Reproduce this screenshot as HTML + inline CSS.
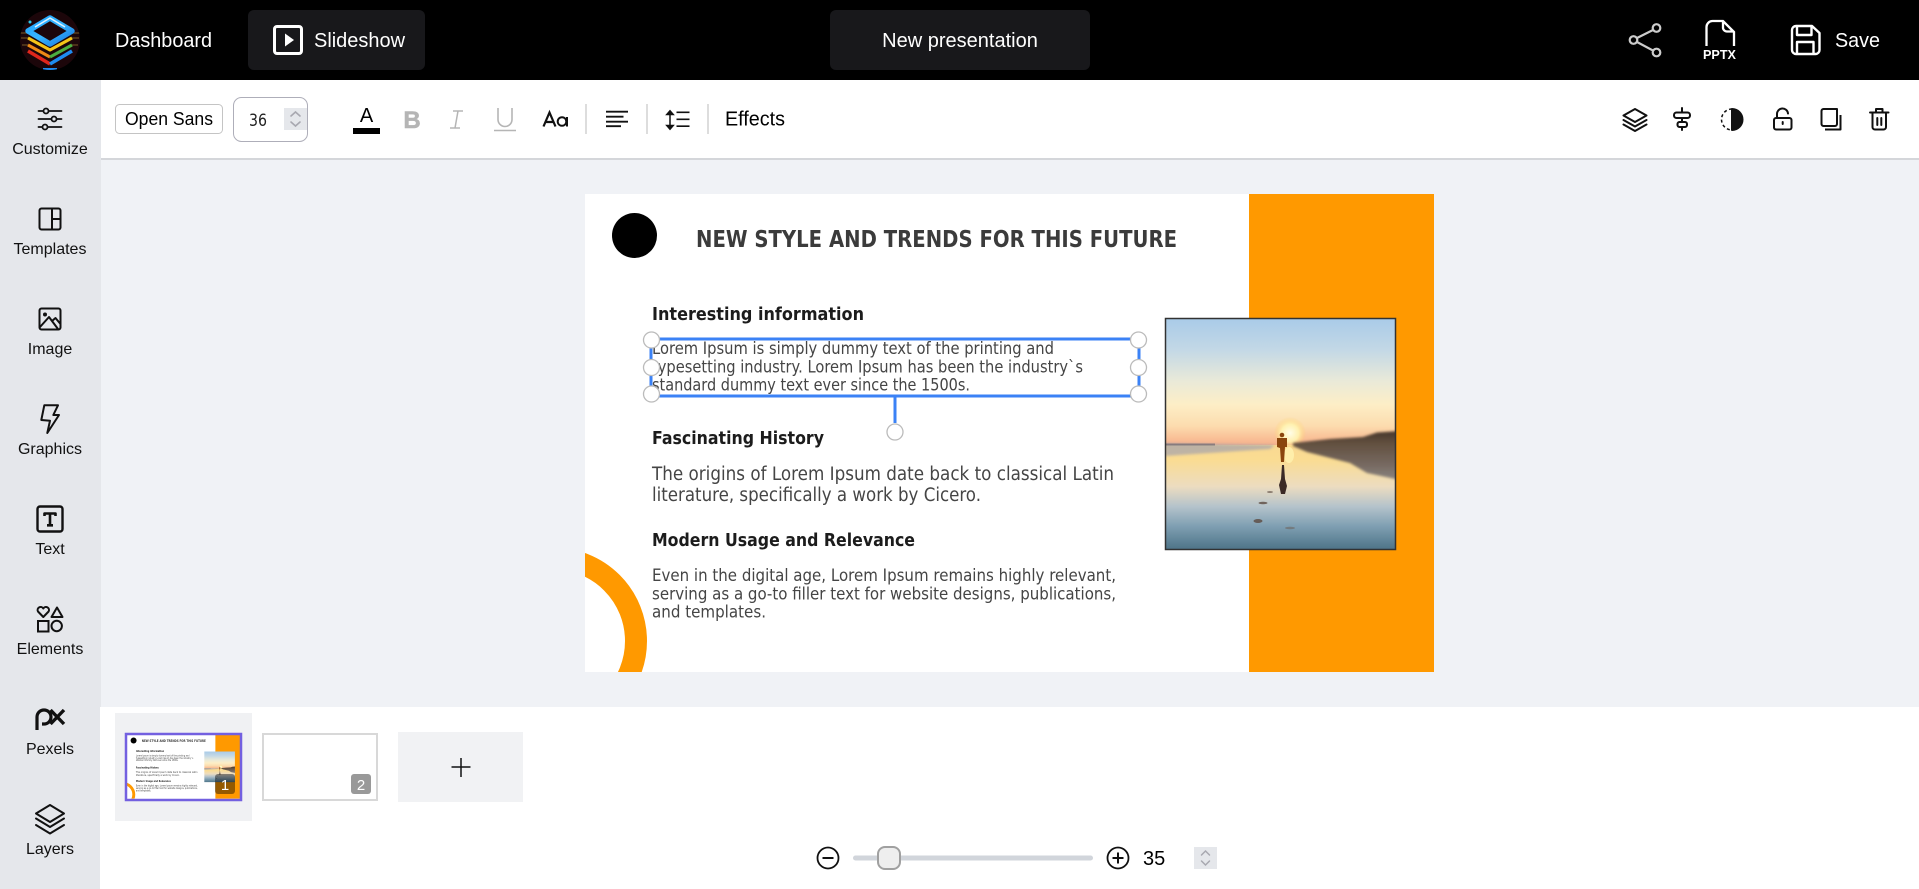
<!DOCTYPE html>
<html><head><meta charset="utf-8"><title>Editor</title>
<style>
html,body{margin:0;padding:0;background:#fff;width:1919px;height:889px;overflow:hidden}
svg{display:block}
text{font-family:"Liberation Sans",Arial,sans-serif}
.lb{font-size:16px;fill:#111;text-anchor:middle}
.w{fill:#fff;font-size:20px}
.ic{fill:none;stroke:#111;stroke-width:2;stroke-linecap:round;stroke-linejoin:round}
.t{font-family:"DejaVu Sans",sans-serif}
.h{font-family:"DejaVu Sans",sans-serif;font-weight:bold;font-size:18px;fill:#1c1c1c}
.b{font-family:"DejaVu Sans",sans-serif;font-size:17px;fill:#444}
.b2{font-family:"DejaVu Sans",sans-serif;font-size:18.5px;fill:#444}
.hd{fill:#fff;stroke:#bbb;stroke-width:1.3}
</style></head><body>
<svg width="1919" height="889" viewBox="0 0 1919 889" xmlns="http://www.w3.org/2000/svg">
<defs>
<linearGradient id="sky" x1="0" y1="0" x2="0" y2="1"><stop offset="0" stop-color="#a9cbe8"/><stop offset=".25" stop-color="#c3d8e6"/><stop offset=".5" stop-color="#eaead8"/><stop offset=".68" stop-color="#fdeec6"/><stop offset=".85" stop-color="#fcdcae"/><stop offset=".95" stop-color="#f9bf96"/><stop offset="1" stop-color="#f5b08c"/></linearGradient>
<linearGradient id="wat" x1="0" y1="0" x2="0" y2="1"><stop offset="0" stop-color="#f9d992"/><stop offset=".14" stop-color="#fadc92"/><stop offset=".4" stop-color="#ecdcc0"/><stop offset=".59" stop-color="#b5c3cb"/><stop offset=".78" stop-color="#7f9fb2"/><stop offset="1" stop-color="#4e7488"/></linearGradient>
<radialGradient id="sun"><stop offset="0" stop-color="#fffde8"/><stop offset=".55" stop-color="#fff2b0" stop-opacity=".95"/><stop offset="1" stop-color="#ffd070" stop-opacity="0"/></radialGradient>
<linearGradient id="shore" x1="0" y1="0" x2="0" y2="1"><stop offset="0" stop-color="#46362b"/><stop offset=".25" stop-color="#62503f"/><stop offset=".7" stop-color="#776a62"/><stop offset="1" stop-color="#8a8480"/></linearGradient>
<linearGradient id="lg" x1="0" y1="0" x2="1" y2="1"><stop offset="0" stop-color="#1ea4ff"/><stop offset=".5" stop-color="#38b6ff"/><stop offset="1" stop-color="#1476e0"/></linearGradient>
<clipPath id="cs"><rect x="585" y="194" width="849" height="478"/></clipPath>
<clipPath id="cl"><circle cx="50" cy="40" r="30"/></clipPath>
<clipPath id="cp"><rect x="1165" y="318" width="231" height="231"/></clipPath>
<filter id="sb" x="-5%" y="-5%" width="110%" height="110%"><feGaussianBlur stdDeviation=".3"/></filter>
<filter id="pb" x="-10%" y="-30%" width="120%" height="160%"><feGaussianBlur stdDeviation="1.200"/></filter>
<g id="photo">
<g clip-path="url(#cp)">
<rect x="1165" y="318" width="231" height="127" fill="url(#sky)"/>
<rect x="1165" y="445" width="231" height="104" fill="url(#wat)"/>
<path d="M1165 443 L1275 445 L1270 449 L1210 453 L1165 456Z" fill="#aaa6aa" opacity=".75" filter="url(#pb)"/>
<path d="M1165 443.500 H1215 V445.500 H1165Z" fill="#6c6670" opacity=".7"/>
<circle cx="1290" cy="433" r="16" fill="url(#sun)"/>
<path d="M1293 443 L1330 439 L1363 437 L1377 432.500 L1400 431 V480 L1367 473 L1350 463 L1307 452 L1293 446Z" fill="url(#shore)" filter="url(#pb)"/>
<ellipse cx="1289" cy="455" rx="5" ry="8" fill="#fff3b0" opacity=".8"/>
<circle cx="1282" cy="435" r="2.300" fill="#8a4410"/>
<path d="M1277 438 L1287 438 L1287 447 L1285 447 L1284 462 L1281 462 L1280 448 L1277 447Z" fill="#8a4410"/>
<path d="M1282 465 L1284 465 L1285 479 L1287 486 L1285 494 L1281 494 L1279 485 L1281 479Z" fill="#3a2a28"/>
<ellipse cx="1270" cy="492" rx="3" ry="1" fill="#6b5a50" opacity=".7"/>
<ellipse cx="1263" cy="503" rx="4.500" ry="1.200" fill="#5b4a40" opacity=".8"/>
<ellipse cx="1258" cy="521" rx="4.500" ry="2" fill="#5b4a40" opacity=".8"/>
<ellipse cx="1290" cy="528" rx="5" ry="1.200" fill="#6b5a50" opacity=".5"/>
</g>
</g>
</defs>

<!-- backgrounds -->
<rect width="1919" height="889" fill="#fff"/>
<rect x="101" y="160" width="1818" height="547" fill="#f0f2f6"/>
<rect x="100" y="158" width="1819" height="2" fill="#d4d6da"/>
<rect x="0" y="80" width="101" height="627" fill="#e5e7eb"/>
<rect x="0" y="707" width="100" height="182" fill="#e5e7eb"/>
<rect width="1919" height="80" fill="#000"/>

<!-- logo -->
<circle cx="50" cy="40" r="30" fill="#1c060a"/>
<g clip-path="url(#cl)" fill="none" stroke-linejoin="round">
<path d="M20 33H33M67 33H80M21 38H31M69 38H79M22 45H28M72 45H78" stroke="#7a5c28" stroke-width="1"/>
<path d="M28 51 50 64" stroke="#e0261c" stroke-width="3.500"/>
<path d="M50 64 72 51" stroke="#1f8bf0" stroke-width="3.500"/>
<path d="M28 45 50 57" stroke="#ee8a16" stroke-width="3"/>
<path d="M50 57 72 45" stroke="#4caf40" stroke-width="3"/>
<path d="M28 38 50 50 72 38" stroke="#f5c518" stroke-width="3"/>
<path d="M50 18 72 31 50 44 28 31Z" stroke="url(#lg)" stroke-width="5.500"/>
<path d="M35 27 50 18 65 27" stroke="#dff3ff" stroke-width="1.600"/>
<path d="M43 69H57" stroke="#1f8bf0" stroke-width="2"/>
</g>
<circle cx="30" cy="22" r="1.500" fill="#2cc8e8"/>

<!-- header -->
<text class="w" x="115" y="47" textLength="97" lengthAdjust="spacingAndGlyphs">Dashboard</text>
<rect x="248" y="10" width="177" height="60" rx="6" fill="#18181b"/>
<rect x="274.500" y="26.500" width="27" height="27" rx="2.500" fill="none" stroke="#fff" stroke-width="3"/>
<path d="M285 33.500V46.500L294 40Z" fill="#fff"/>
<text class="w" x="314" y="47" textLength="91" lengthAdjust="spacingAndGlyphs">Slideshow</text>
<rect x="830" y="10" width="260" height="60" rx="6" fill="#18181b"/>
<text class="w" x="960" y="47" text-anchor="middle">New presentation</text>

<g fill="none" stroke="#ccc" stroke-width="2.200"><circle cx="1633.500" cy="40" r="3.800"/><circle cx="1656.500" cy="28" r="3.800"/><circle cx="1656.500" cy="52.500" r="3.800"/><path d="M1637 38 1653 30M1637 42 1653 50.500"/></g>
<path d="M1706.500 46V27a6 6 0 0 1 6-6H1723L1734 32V46M1723 21V27a4 4 0 0 0 4 4.500H1734" fill="none" stroke="#fff" stroke-width="2.300"/>
<text x="1703" y="59" font-size="13" font-weight="bold" fill="#fff" textLength="33" lengthAdjust="spacingAndGlyphs">PPTX</text>
<path d="M1792 30a4 4 0 0 1 4-4H1812L1819.500 33V50a4 4 0 0 1-4 4H1796a4 4 0 0 1-4-4Z M1797 26V35H1811.500V26 M1797 54V42H1813.500V54" fill="none" stroke="#fff" stroke-width="2.400" stroke-linejoin="round"/>
<text class="w" x="1835" y="47" textLength="45" lengthAdjust="spacingAndGlyphs">Save</text>

<!-- toolbar left -->
<rect x="115.500" y="104.500" width="107" height="29" rx="4" fill="#fff" stroke="#c4c4c4"/>
<text x="125" y="125" font-size="18" fill="#000" textLength="88" lengthAdjust="spacingAndGlyphs">Open Sans</text>
<rect x="233.500" y="97.500" width="74" height="44" rx="8" fill="#fff" stroke="#aeaeb9"/>
<text class="t" x="249" y="126" font-size="17" fill="#222" textLength="18" lengthAdjust="spacingAndGlyphs">36</text>
<rect x="284" y="108" width="23" height="22" fill="#e5e7eb"/>
<path d="M291 116 295.500 112 300 116M291 122 295.500 126 300 122" fill="none" stroke="#a8a8b0" stroke-width="1.600" stroke-linecap="round"/>
<text x="366.500" y="122" font-size="20" text-anchor="middle" fill="#000">A</text>
<rect x="353" y="128" width="27" height="6" fill="#000"/>
<text x="412" y="128" font-size="24" font-weight="bold" text-anchor="middle" fill="#b5b5b5" stroke="#b5b5b5" stroke-width=".5">B</text>
<path d="M453 111H463M450 128H460M458 111 455 128" stroke="#b5b5b5" stroke-width="1.500" fill="none"/>
<path d="M498 108V119.500a7 7 0 0 0 14 0V108M494 130.500H516" stroke="#b5b5b5" stroke-width="1.600" fill="none"/>
<path d="M543.500 126.500 549.500 112.500 555.500 126.500M545.800 122H553.200" stroke="#111" stroke-width="2.200" fill="none"/>
<circle cx="562" cy="121.500" r="4.300" fill="none" stroke="#111" stroke-width="2"/><path d="M567 117V126.500" stroke="#111" stroke-width="2"/>
<path d="M586 104V134M647 104V134M708 104V134" stroke="#d2d2d2" stroke-width="1.500"/>
<path d="M606 111.700H628M606 116.700H623.500M606 121.700H628M606 126.200H621" stroke="#111" stroke-width="1.800"/>
<path d="M670 112V128M666.800 114.500 670 110.800 673.200 114.500ZM666.800 125.500 670 129.200 673.200 125.500Z" stroke="#111" stroke-width="1.500" fill="#111"/>
<path d="M676.500 112.300H689.500M676.500 119.300H689.500M676.500 126.200H689.500" stroke="#111" stroke-width="1.600"/>
<text x="725" y="125.500" font-size="20" fill="#000" textLength="60" lengthAdjust="spacingAndGlyphs">Effects</text>

<!-- toolbar right -->
<g class="ic">
<path d="M1635 109 1646.500 115.500 1635 122 1623.500 115.500Z M1623.500 120 1635 126.500 1646.500 120 M1623.500 124.500 1635 131 1646.500 124.500"/>
<path d="M1682 108V112M1682 118V122M1682 127V130"/><rect x="1674" y="112.500" width="16" height="5.500" rx="2.500"/><rect x="1677.500" y="122" width="9.500" height="5" rx="2"/>
<path d="M1732 109a10.500 10.500 0 0 1 0 21Z" fill="#111" stroke="#111"/>
<path d="M1732 109a10.500 10.500 0 0 0 0 21" stroke-dasharray="3 2.500" stroke-width="1.500" stroke-linecap="butt"/>
<rect x="1774" y="118" width="17.500" height="11.500" rx="2"/><path d="M1777 118V114.500a5.500 5.500 0 0 1 11-1"/><path d="M1782.700 122v2"/>
<path d="M1821.500 111a2 2 0 0 1 2-2H1837V124a2 2 0 0 1-2 2H1823.500a2 2 0 0 1-2-2Z"/><path d="M1840.500 115V129.500H1825" stroke-linecap="butt"/>
<path d="M1870 112.500H1888.500M1876 112.500V109H1882.500V112.500M1872.500 112.500V127a2.500 2.500 0 0 0 2.500 2.500H1883.500a2.500 2.500 0 0 0 2.500-2.500V112.500M1877.300 118V125M1881.300 118V125"/>
</g>

<!-- sidebar icons -->
<g class="ic">
<path d="M38.500 111H43M49 111H61.500M38.500 119H51M57 119H61.500M38.500 127H42M48 127H61.500" stroke-width="1.800"/><circle cx="46" cy="111" r="2.500" stroke-width="1.800"/><circle cx="54" cy="119" r="2.500" stroke-width="1.800"/><circle cx="45" cy="127" r="2.500" stroke-width="1.800"/>
<rect x="39.500" y="208.500" width="21" height="21" rx="2"/><path d="M52 208.500V229.500M52 219H60.500"/>
<rect x="39.500" y="308.500" width="21" height="21" rx="2"/><circle cx="45" cy="314.500" r="1" fill="#111"/><path d="M40 327 49 317 58 329M52 321 55.500 318 60.500 324"/>
<path d="M44.300 405.300H58L53.300 415H59L47.300 433 50 420.700 41.300 420Z"/>
<rect x="37.500" y="506.500" width="25" height="25" rx="2.500" stroke-width="2.400"/><path d="M44.500 516V513.500H55.500V516M50 513.500V525M47 525.300H53" stroke-width="2.600" stroke-linecap="butt"/>
<path d="M43.300 617 38 611.500a3 3 0 0 1 5.300-3 3 3 0 0 1 5.300 3Z"/><path d="M57 607.500 62.500 617H51.500Z"/><rect x="38" y="621" width="10.500" height="10.500" stroke-linejoin="miter"/><circle cx="56.700" cy="626" r="5.200"/>
<path d="M37 730V717a7 7 0 1 1 7 7H42" stroke-width="3.200" stroke-linecap="butt"/><path d="M50.500 710 64 724M64 710 50.500 724" stroke-width="3.400" stroke-linecap="butt"/>
<path d="M50 805 64 813.500 50 822 36 813.500Z M36 818.500 50 827 64 818.500 M36 825 50 833.500 64 825"/>
</g>
<text class="lb" x="50" y="154">Customize</text>
<text class="lb" x="50" y="254">Templates</text>
<text class="lb" x="50" y="354">Image</text>
<text class="lb" x="50" y="454">Graphics</text>
<text class="lb" x="50" y="554">Text</text>
<text class="lb" x="50" y="654">Elements</text>
<text class="lb" x="50" y="754">Pexels</text>
<text class="lb" x="50" y="854">Layers</text>

<!-- slide -->
<g filter="url(#sb)">
<rect x="585" y="194" width="849" height="478" fill="#fff"/>
<rect x="1249" y="194" width="185" height="478" fill="#ff9900"/>
<g clip-path="url(#cs)"><circle cx="553.500" cy="641" r="82.500" fill="none" stroke="#ff9900" stroke-width="22"/></g>
<circle cx="634.500" cy="235.500" r="22.500" fill="#000"/>
<use href="#photo"/>
<rect x="1165.500" y="318.500" width="230" height="231" fill="none" stroke="#333" stroke-width="1.500"/>
<text class="t" x="696" y="247" font-size="23.500" font-weight="bold" fill="#3a3a3a" textLength="481" lengthAdjust="spacingAndGlyphs">NEW STYLE AND TRENDS FOR THIS FUTURE</text>
<text class="h" x="652" y="320" textLength="212" lengthAdjust="spacingAndGlyphs">Interesting information</text>
<text class="b" x="652" y="354" textLength="402" lengthAdjust="spacingAndGlyphs">Lorem Ipsum is simply dummy text of the printing and</text>
<text class="b" x="652" y="372.500" textLength="431" lengthAdjust="spacingAndGlyphs">typesetting industry. Lorem Ipsum has been the industry`s</text>
<text class="b" x="652" y="390.500" textLength="318" lengthAdjust="spacingAndGlyphs">standard dummy text ever since the 1500s.</text>
<text class="h" x="652" y="444" textLength="172" lengthAdjust="spacingAndGlyphs">Fascinating History</text>
<text class="b2" x="652" y="480" textLength="462" lengthAdjust="spacingAndGlyphs">The origins of Lorem Ipsum date back to classical Latin</text>
<text class="b2" x="652" y="501" textLength="329" lengthAdjust="spacingAndGlyphs">literature, specifically a work by Cicero.</text>
<text class="h" x="652" y="546" textLength="263" lengthAdjust="spacingAndGlyphs">Modern Usage and Relevance</text>
<text class="b" x="652" y="581" textLength="464" lengthAdjust="spacingAndGlyphs">Even in the digital age, Lorem Ipsum remains highly relevant,</text>
<text class="b" x="652" y="599.500" textLength="464" lengthAdjust="spacingAndGlyphs">serving as a go-to filler text for website designs, publications,</text>
<text class="b" x="652" y="617.500" textLength="114" lengthAdjust="spacingAndGlyphs">and templates.</text>
</g>

<!-- selection -->
<rect x="651" y="339" width="488" height="57" fill="none" stroke="#3b82f6" stroke-width="3"/>
<path d="M895 396V423" stroke="#3b82f6" stroke-width="3"/>
<circle class="hd" cx="651.500" cy="340" r="8"/><circle class="hd" cx="1138.500" cy="340" r="8"/>
<circle class="hd" cx="651.500" cy="367.500" r="8"/><circle class="hd" cx="1138.500" cy="367.500" r="8"/>
<circle class="hd" cx="651.500" cy="394" r="8"/><circle class="hd" cx="1138.500" cy="394" r="8"/>
<circle class="hd" cx="895" cy="432" r="8"/>

<!-- thumbnails -->
<rect x="115" y="713" width="137" height="108" fill="#f0f1f3"/>
<rect x="126" y="734" width="115" height="66" fill="#fff"/>
<g transform="translate(127,735) scale(.1331) translate(-585,-194)">
<rect x="1249" y="194" width="185" height="478" fill="#ff9900"/>
<g clip-path="url(#cs)"><circle cx="553.500" cy="641" r="82.500" fill="none" stroke="#ff9900" stroke-width="22"/></g>
<circle cx="634.500" cy="235.500" r="22.500" fill="#000"/>
<use href="#photo"/>
<text class="t" x="696" y="247" font-size="23.500" font-weight="bold" fill="#3a3a3a" textLength="481" lengthAdjust="spacingAndGlyphs">NEW STYLE AND TRENDS FOR THIS FUTURE</text>
<text class="h" x="652" y="321" textLength="212" lengthAdjust="spacingAndGlyphs">Interesting information</text>
<text class="b" x="652" y="354" textLength="402" lengthAdjust="spacingAndGlyphs">Lorem Ipsum is simply dummy text of the printing and</text>
<text class="b" x="652" y="372.500" textLength="431" lengthAdjust="spacingAndGlyphs">typesetting industry. Lorem Ipsum has been the industry`s</text>
<text class="b" x="652" y="391" textLength="318" lengthAdjust="spacingAndGlyphs">standard dummy text ever since the 1500s.</text>
<text class="h" x="652" y="445" textLength="172" lengthAdjust="spacingAndGlyphs">Fascinating History</text>
<text class="b2" x="652" y="481" textLength="462" lengthAdjust="spacingAndGlyphs">The origins of Lorem Ipsum date back to classical Latin</text>
<text class="b2" x="652" y="501.500" textLength="329" lengthAdjust="spacingAndGlyphs">literature, specifically a work by Cicero.</text>
<text class="h" x="652" y="546.500" textLength="263" lengthAdjust="spacingAndGlyphs">Modern Usage and Relevance</text>
<text class="b" x="652" y="581.500" textLength="464" lengthAdjust="spacingAndGlyphs">Even in the digital age, Lorem Ipsum remains highly relevant,</text>
<text class="b" x="652" y="600" textLength="464" lengthAdjust="spacingAndGlyphs">serving as a go-to filler text for website designs, publications,</text>
<text class="b" x="652" y="618" textLength="114" lengthAdjust="spacingAndGlyphs">and templates.</text>
</g>
<rect x="126" y="734" width="115" height="66" fill="none" stroke="#7360e0" stroke-width="2.500"/>
<rect x="215" y="774" width="20" height="20" rx="3" fill="#000" fill-opacity=".42"/>
<text x="225" y="790" font-size="15" fill="#fff" text-anchor="middle">1</text>
<rect x="263" y="734" width="114" height="66" fill="#fff" stroke="#d8d8d8" stroke-width="2"/>
<rect x="351" y="774" width="20" height="20" rx="3" fill="#999"/>
<text x="361" y="790" font-size="15" fill="#fff" text-anchor="middle">2</text>
<rect x="398" y="732" width="125" height="70" fill="#f1f2f4"/>
<path d="M461 758V777M451.500 767H470.500" stroke="#111" stroke-width="1.500"/>

<!-- zoom -->
<circle cx="828" cy="858" r="10.500" fill="none" stroke="#111" stroke-width="1.800"/><path d="M822.500 858H833.500" stroke="#111" stroke-width="2"/>
<rect x="853" y="855.500" width="240" height="5" rx="2.500" fill="#d1d5db"/>
<rect x="878" y="847" width="22" height="22" rx="7" fill="#eee" stroke="#a0a0a0" stroke-width="2"/>
<circle cx="1118" cy="858" r="10.500" fill="none" stroke="#111" stroke-width="1.800"/><path d="M1112.500 858H1123.500M1118 852.500V863.500" stroke="#111" stroke-width="2"/>
<text x="1143" y="865" font-size="20" fill="#000">35</text>
<rect x="1194" y="847" width="23" height="22" fill="#e5e7eb"/>
<path d="M1201.500 855 1205.500 851 1209.500 855M1201.500 861 1205.500 865 1209.500 861" fill="none" stroke="#a8a8b0" stroke-width="1.500" stroke-linecap="round"/>
</svg>
</body></html>
